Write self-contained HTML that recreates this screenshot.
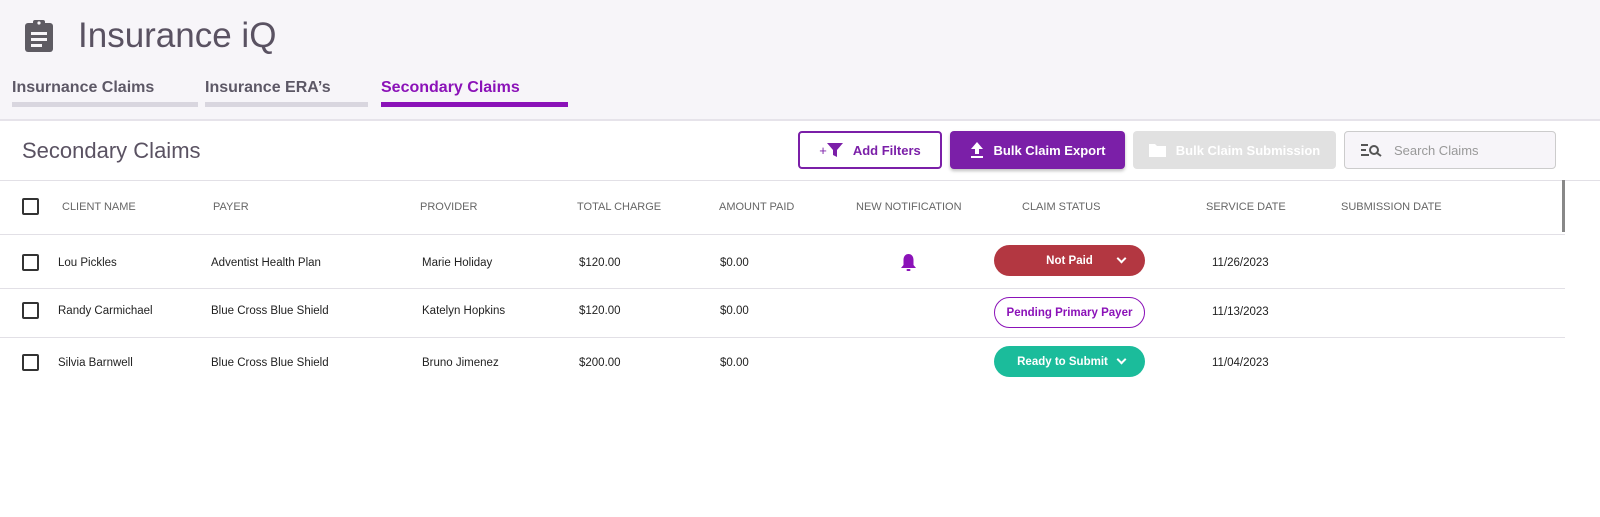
<!DOCTYPE html>
<html><head><style>
*{box-sizing:border-box;margin:0;padding:0}
body{width:1600px;height:517px;background:#fff;font-family:"Liberation Sans",sans-serif;position:relative;overflow:hidden;color:#333}
.a{position:absolute;white-space:nowrap}
.top{position:absolute;left:0;top:0;width:1600px;height:121px;background:#f7f5f9;border-bottom:2px solid #e6e3ea}
.tab{position:absolute;top:79px;font-size:16px;font-weight:bold;color:#5d5866}
.ul{position:absolute;top:102px;height:5px;background:#d9d6df}
.btn{position:absolute;top:131px;height:38px;border-radius:4px;font-size:13px;font-weight:bold;display:flex;align-items:center;justify-content:center;gap:10px;white-space:nowrap}
.th{position:absolute;top:201px;font-size:11px;color:#666}
.td{position:absolute;font-size:11.5px;color:#222}
.cb{position:absolute;left:22px;width:17px;height:17px;border:2px solid #333;border-radius:2px}
.hr{position:absolute;left:0;width:1565px;height:1px;background:#e2e0e6}
.pill{position:absolute;left:994px;width:151px;height:31px;border-radius:16px;font-size:11.5px;font-weight:bold;display:flex;align-items:center;justify-content:center}
.chev{position:absolute;right:20px;top:10px;width:7px;height:7px;border-right:2px solid #fff;border-bottom:2px solid #fff;transform:rotate(45deg)}
</style></head><body>
<div class="top"></div>
<svg class="a" style="left:24px;top:19px" width="30" height="34" viewBox="0 0 30 34"><rect x="1" y="4" width="28" height="29" rx="3" fill="#5e5b63"/><rect x="9" y="1" width="12" height="7" rx="2" fill="#5e5b63"/><circle cx="15" cy="4" r="1.6" fill="#f7f5f9"/><rect x="7" y="13" width="16" height="3" fill="#f7f5f9"/><rect x="7" y="19" width="16" height="3" fill="#f7f5f9"/><rect x="7" y="25" width="11" height="3" fill="#f7f5f9"/></svg>
<div class="a" style="left:78px;top:16px;font-size:35px;color:#5a5262">Insurance iQ</div>
<div class="tab" style="left:12px">Insurnance Claims</div><div class="ul" style="left:12px;width:186px"></div>
<div class="tab" style="left:205px">Insurance ERA’s</div><div class="ul" style="left:205px;width:163px"></div>
<div class="tab" style="left:381px;color:#8b12b8">Secondary Claims</div><div class="ul" style="left:381px;width:187px;background:#8b12b8"></div>

<div class="a" style="left:22px;top:138px;font-size:22px;color:#5a5262">Secondary Claims</div>
<div class="btn" style="left:798px;width:144px;border:2px solid #7b1fa8;color:#7b1fa8;background:#fff"><span style="font-weight:normal">+<svg width="16" height="14" viewBox="0 0 16 14" style="vertical-align:-2px"><path d="M0 0H16L10 7V14L6 12V7Z" fill="#7b1fa8"/></svg></span>Add Filters</div>
<div class="btn" style="left:950px;width:175px;background:#7b1fa8;color:#fff;box-shadow:0 2px 3px rgba(0,0,0,.25)"><svg width="14" height="16" viewBox="0 0 14 16"><path d="M7 0L13 7H9V12H5V7H1Z" fill="#fff"/><rect x="1" y="14" width="12" height="2" fill="#fff"/></svg>Bulk Claim Export</div>
<div class="btn" style="left:1133px;width:203px;background:#e1e1e1;color:#fff"><svg width="17" height="14" viewBox="0 0 17 14"><path d="M0 1H6L8 3H17V14H0Z" fill="#fff"/></svg>Bulk Claim Submission</div>
<div class="btn" style="left:1344px;width:212px;background:#f7f5f9;border:1px solid #ccc;justify-content:flex-start;padding-left:15px;font-weight:normal;color:#999;gap:12px"><svg width="22" height="14" viewBox="0 0 22 14"><path d="M1 2H8M1 7H6M1 12H9" stroke="#555" stroke-width="2"/><circle cx="14" cy="7" r="4" stroke="#555" stroke-width="2" fill="none"/><path d="M17 10L21 13" stroke="#555" stroke-width="2"/></svg>Search Claims</div>

<div class="hr" style="top:180px;width:1600px"></div>
<div class="a" style="left:1562px;top:180px;width:3px;height:52px;background:#888"></div>
<div class="cb" style="top:198px"></div>
<div class="th" style="left:62px">CLIENT NAME</div>
<div class="th" style="left:213px">PAYER</div>
<div class="th" style="left:420px">PROVIDER</div>
<div class="th" style="left:577px">TOTAL CHARGE</div>
<div class="th" style="left:719px">AMOUNT PAID</div>
<div class="th" style="left:856px">NEW NOTIFICATION</div>
<div class="th" style="left:1022px">CLAIM STATUS</div>
<div class="th" style="left:1206px">SERVICE DATE</div>
<div class="th" style="left:1341px">SUBMISSION DATE</div>
<div class="hr" style="top:234px"></div>

<div class="cb" style="top:254px"></div>
<div class="td" style="left:58px;top:257px">Lou Pickles</div>
<div class="td" style="left:211px;top:257px">Adventist Health Plan</div>
<div class="td" style="left:422px;top:257px">Marie Holiday</div>
<div class="td" style="left:579px;top:257px">$120.00</div>
<div class="td" style="left:720px;top:257px">$0.00</div>
<svg class="a" style="left:900px;top:253px" width="17" height="19" viewBox="0 0 17 19"><path d="M8.5 1C5 1 3.5 4 3.5 7V12L1 15H16L13.5 12V7C13.5 4 12 1 8.5 1Z" fill="#8b12b8"/><rect x="6.5" y="16" width="4" height="2" rx="1" fill="#8b12b8"/></svg>
<div class="pill" style="top:245px;background:#b33741;color:#fff">Not Paid<span class="chev"></span></div>
<div class="td" style="left:1212px;top:257px">11/26/2023</div>
<div class="hr" style="top:288px"></div>

<div class="cb" style="top:302px"></div>
<div class="td" style="left:58px;top:305px">Randy Carmichael</div>
<div class="td" style="left:211px;top:305px">Blue Cross Blue Shield</div>
<div class="td" style="left:422px;top:305px">Katelyn Hopkins</div>
<div class="td" style="left:579px;top:305px">$120.00</div>
<div class="td" style="left:720px;top:305px">$0.00</div>
<div class="pill" style="top:297px;border:1px solid #8b12b8;color:#8b12b8;background:#fff">Pending Primary Payer</div>
<div class="td" style="left:1212px;top:306px">11/13/2023</div>
<div class="hr" style="top:337px"></div>

<div class="cb" style="top:354px"></div>
<div class="td" style="left:58px;top:357px">Silvia Barnwell</div>
<div class="td" style="left:211px;top:357px">Blue Cross Blue Shield</div>
<div class="td" style="left:422px;top:357px">Bruno Jimenez</div>
<div class="td" style="left:579px;top:357px">$200.00</div>
<div class="td" style="left:720px;top:357px">$0.00</div>
<div class="pill" style="top:346px;background:#1bbc9b;color:#fff;padding-right:14px">Ready to Submit<span class="chev"></span></div>
<div class="td" style="left:1212px;top:357px">11/04/2023</div>
</body></html>
